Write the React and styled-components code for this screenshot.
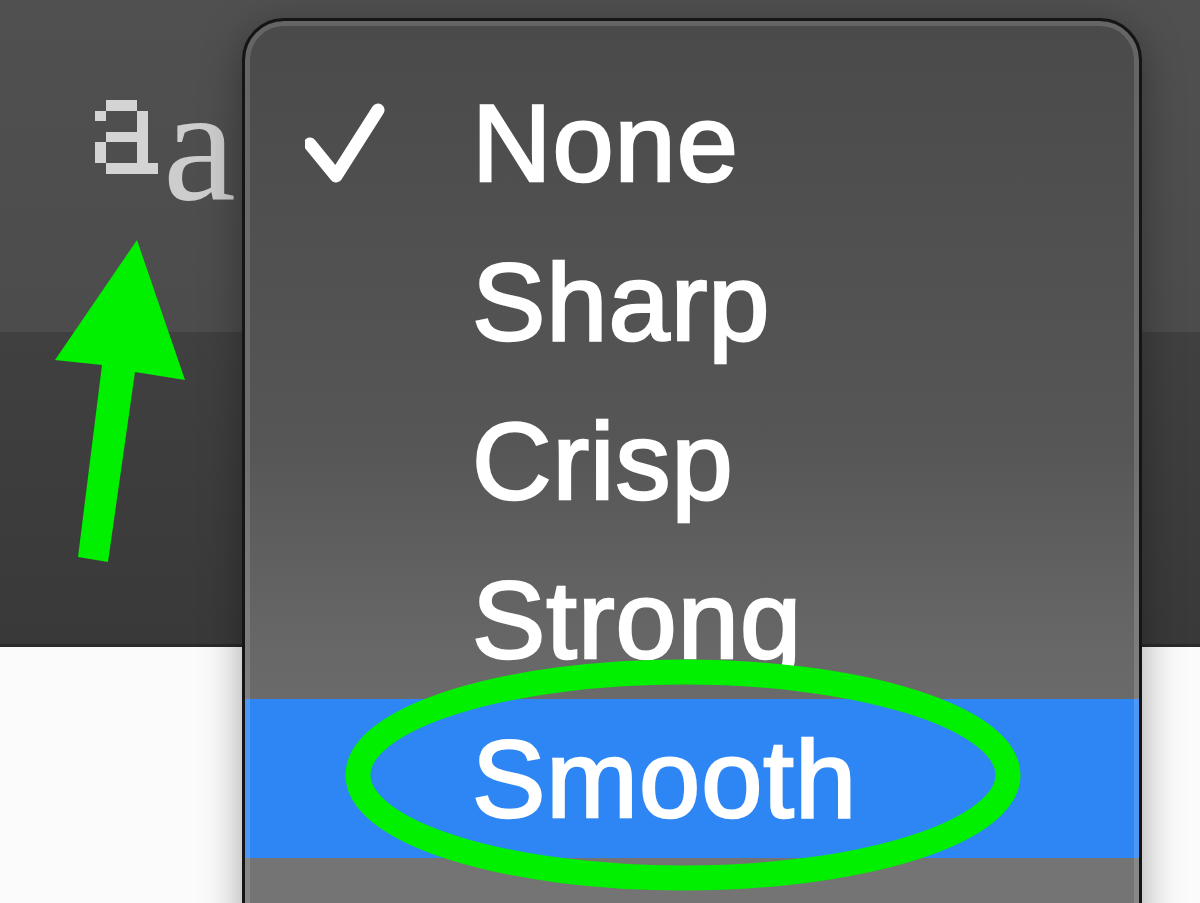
import React from 'react';
import styled, { createGlobalStyle } from 'styled-components';

const GlobalStyle = createGlobalStyle`
  html, body {
    margin: 0;
    padding: 0;
    background: #fbfbfb;
  }
  body {
    font-family: 'Liberation Sans', Arial, sans-serif;
    overflow: hidden;
  }
`;

const Page = styled.div`
  position: relative;
  width: 1200px;
  height: 903px;
  display: flex;
  flex-direction: column;
  overflow: hidden;
`;

const Toolbar = styled.div`
  flex: none;
  height: 332px;
  box-sizing: border-box;
  padding: 60px 0 0 95px;
  display: flex;
  align-items: flex-start;
  background: linear-gradient(#505050, #4c4c4c);
`;

const Band = styled.div`
  flex: none;
  height: 315px;
  box-sizing: border-box;
  background: linear-gradient(#404040, #393939);
  border-bottom: 3px solid #2b2b2b;
`;

const Content = styled.div`
  flex: 1;
  background: #fbfbfb;
`;

// the font smoothing toggle: an aliased "a" next to a smooth one
const SmoothingIcon = styled.div`
  display: flex;
  align-items: flex-start;
  gap: 5px;
`;

const PixelGlyph = styled.svg`
  margin-top: 40px;
  flex: none;
`;

const SerifGlyph = styled.span`
  margin-top: 2px;
  font-family: 'Liberation Serif', 'Times New Roman', serif;
  font-size: 164px;
  line-height: 1;
  color: #cdcdcd;
`;

const Menu = styled.div`
  position: absolute;
  left: 242px;
  top: 18px;
  width: 900px;
  height: 950px;
  box-sizing: border-box;
  padding-top: 42px;
  border: 3px solid #151515;
  border-radius: 42px;
  overflow: hidden;
  background: linear-gradient(#4a4a4a 0%, #565656 45%, #676767 66%, #747474 90%);
  box-shadow: 0 10px 40px rgba(0, 0, 0, 0.35);

  &::after {
    content: '';
    position: absolute;
    inset: 0;
    border-radius: 39px;
    box-shadow: inset 0 0 0 5px rgba(255, 255, 255, 0.15);
    pointer-events: none;
  }
`;

const Item = styled.div`
  display: flex;
  align-items: center;
  height: 159px;
  padding-left: 60px;
  background: ${props => (props.active ? '#2e86f5' : 'transparent')};
`;

const CheckCell = styled.div`
  flex: none;
  width: 167px;
  height: 80px;
`;

const Label = styled.span`
  font-size: 110px;
  line-height: 159px;
  letter-spacing: 1px;
  color: #fff;
  -webkit-text-stroke: 2.6px #fff;
`;

const Annotations = styled.svg`
  position: absolute;
  left: 0;
  top: 0;
  pointer-events: none;
`;

const PIXELS = [
  [1, 0], [2, 0], [3, 0],
  [0, 1], [4, 1],
  [4, 2],
  [1, 3], [2, 3], [3, 3], [4, 3],
  [0, 4], [4, 4],
  [0, 5], [4, 5],
  [1, 6], [2, 6], [3, 6], [4, 6], [5, 6],
];

const items = ['None', 'Sharp', 'Crisp', 'Strong', 'Smooth'];

const CheckMark = () => (
  <svg width="80" height="80" viewBox="0 0 80 80">
    <polyline
      points="5,41 31,73 73,7"
      fill="none"
      stroke="#fff"
      strokeWidth="13"
      strokeLinecap="round"
      strokeLinejoin="round"
    />
  </svg>
);

const App = () => (
  <Page>
    <GlobalStyle />
    <Toolbar>
      <SmoothingIcon>
        <PixelGlyph width="63" height="74" viewBox="0 0 63 74" shapeRendering="crispEdges">
          {PIXELS.map(([x, y]) => (
            <rect
              key={`${x}-${y}`}
              x={x * 10.5}
              y={y * 10.5}
              width="10.5"
              height="10.5"
              fill="#d4d4d4"
            />
          ))}
        </PixelGlyph>
        <SerifGlyph>a</SerifGlyph>
      </SmoothingIcon>
    </Toolbar>
    <Band />
    <Content />

    <Menu>
      {items.map(item => (
        <Item key={item} active={item === 'Smooth'}>
          <CheckCell>{item === 'None' && <CheckMark />}</CheckCell>
          <Label>{item}</Label>
        </Item>
      ))}
    </Menu>

    <Annotations width="1200" height="903" viewBox="0 0 1200 903">
      <polygon
        points="137,240 185,380 135,372 108,562 78,557 102,365 55,360"
        fill="#00f000"
      />
      <ellipse
        cx="683"
        cy="775"
        rx="325"
        ry="103"
        fill="none"
        stroke="#00f000"
        strokeWidth="25"
      />
    </Annotations>
  </Page>
);

export default App;
